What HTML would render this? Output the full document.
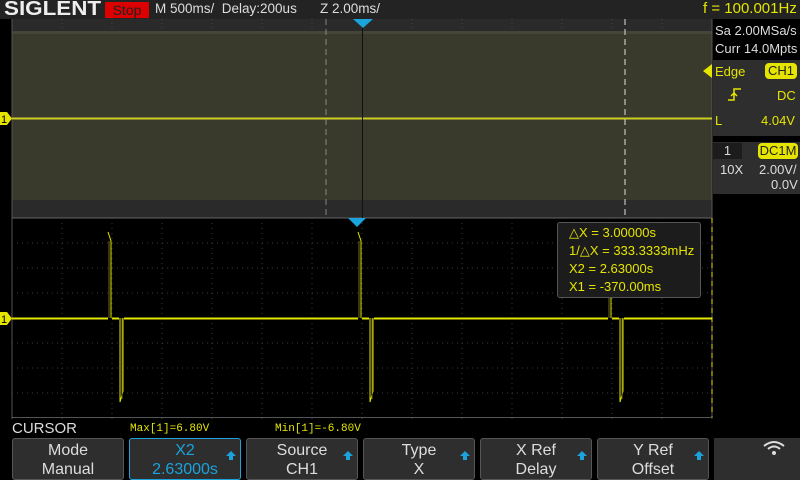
<!DOCTYPE html>
<html><head><style>
body{margin:0;width:800px;height:480px;background:#000;overflow:hidden;font-family:"Liberation Sans",sans-serif;position:relative}
.a{position:absolute;white-space:nowrap}
.btn{position:absolute;top:438px;width:112px;height:42px;background:#2e2e2e;border:1px solid #555;border-radius:3px;box-sizing:border-box;color:#ddd;font-size:16px;text-align:center;line-height:19px;padding-top:2px}
.up{position:absolute;right:4px;top:12px;width:0;height:0;border-left:5px solid transparent;border-right:5px solid transparent;border-bottom:5px solid #1aa3dd}
.up:after{content:"";position:absolute;left:-2px;top:5px;width:4px;height:4px;background:#1aa3dd}
</style></head><body>
<div class="a" style="left:0;top:0;width:800px;height:19px;background:#232323"></div>
<div class="a" style="left:4px;top:-2px;color:#eee;font-weight:bold;font-size:20px;transform:scaleX(1.12);transform-origin:0 0">SIGLENT</div>
<div class="a" style="left:105px;top:2px;width:44px;height:16px;background:#d00;color:#222;font-size:14px;line-height:16px;text-align:center">Stop</div>
<div class="a" style="left:155px;top:1px;color:#ddd;font-size:13.5px">M 500ms/&nbsp; Delay:200us</div>
<div class="a" style="left:320px;top:1px;color:#ddd;font-size:13.5px">Z 2.00ms/</div>
<div class="a" style="left:703px;top:0px;color:#e5e500;font-size:15px">f = 100.001Hz</div>

<svg class="a" style="left:0;top:19px" width="713" height="400">
<rect x="12" y="0" width="700" height="181" fill="#3a3a2c"/>
<rect x="12" y="0" width="700" height="12" fill="#2a2a2a"/>
<rect x="12" y="12" width="700" height="3" fill="#45453a"/>
<rect x="12" y="181" width="700" height="18" fill="#2a2a2a"/>
<line x1="12" y1="199" x2="712" y2="199" fill="none" stroke="#666"/>
<line x1="12" y1="0" x2="12" y2="400" stroke="#555"/>
<line x1="712" y1="0" x2="712" y2="400" stroke="#555"/>
<g stroke="#444" stroke-dasharray="1,3">
<line x1="62" y1="0" x2="62" y2="12"/><line x1="112" y1="0" x2="112" y2="12"/><line x1="162" y1="0" x2="162" y2="12"/><line x1="212" y1="0" x2="212" y2="12"/><line x1="262" y1="0" x2="262" y2="12"/><line x1="312" y1="0" x2="312" y2="12"/>
<line x1="412" y1="0" x2="412" y2="12"/><line x1="462" y1="0" x2="462" y2="12"/><line x1="512" y1="0" x2="512" y2="12"/><line x1="562" y1="0" x2="562" y2="12"/><line x1="612" y1="0" x2="612" y2="12"/><line x1="662" y1="0" x2="662" y2="12"/>
</g>
<line x1="12" y1="99.5" x2="712" y2="99.5" stroke="#cccc22" stroke-width="2"/>
<line x1="326" y1="0" x2="326" y2="199" stroke="#aaa" stroke-dasharray="6,4" opacity=".7"/>
<line x1="625" y1="0" x2="625" y2="199" stroke="#ddd" stroke-dasharray="6,4"/>
<line x1="362.5" y1="6" x2="362.5" y2="199" stroke="#111"/>
<polygon points="353,0 373,0 363,9" fill="#1aa3dd"/>
<g stroke="#3a3a3a" stroke-dasharray="1,4">
<line x1="62" y1="199" x2="62" y2="400"/><line x1="112" y1="199" x2="112" y2="400"/><line x1="162" y1="199" x2="162" y2="400"/><line x1="212" y1="199" x2="212" y2="400"/><line x1="262" y1="199" x2="262" y2="400"/><line x1="312" y1="199" x2="312" y2="400"/><line x1="362" y1="199" x2="362" y2="400"/><line x1="412" y1="199" x2="412" y2="400"/><line x1="462" y1="199" x2="462" y2="400"/><line x1="512" y1="199" x2="512" y2="400"/><line x1="562" y1="199" x2="562" y2="400"/><line x1="612" y1="199" x2="612" y2="400"/><line x1="662" y1="199" x2="662" y2="400"/>
<line x1="12" y1="224" x2="712" y2="224"/><line x1="12" y1="249" x2="712" y2="249"/><line x1="12" y1="274" x2="712" y2="274"/><line x1="12" y1="324" x2="712" y2="324"/><line x1="12" y1="349" x2="712" y2="349"/><line x1="12" y1="374" x2="712" y2="374"/>
</g>
<line x1="12" y1="398.5" x2="712" y2="398.5" stroke="#555"/>
<g fill="none" stroke="#e5e500" stroke-width="1">
<path d="M108,213 L111,222 L111,299 M120,299 L120,383 L123,372 L123,299"/>
<path d="M358,213 L361,222 L361,299 M370,299 L370,383 L373,372 L373,299"/>
<path d="M608,213 L611,222 L611,299 M620,299 L620,383 L623,372 L623,299"/>
</g>
<g stroke="#6a6a20" stroke-width="1"><line x1="109" y1="222" x2="109" y2="299"/><line x1="122" y1="299" x2="122" y2="380"/><line x1="359" y1="222" x2="359" y2="299"/><line x1="372" y1="299" x2="372" y2="380"/><line x1="609" y1="222" x2="609" y2="299"/><line x1="622" y1="299" x2="622" y2="380"/></g>
<path d="M12,299.5 H108 M112,299.5 H119 M124,299.5 H358 M362,299.5 H369 M374,299.5 H608 M612,299.5 H619 M624,299.5 H712" stroke="#e5e500" stroke-width="2"/>
<polygon points="348,199 366,199 357,208" fill="#1aa3dd"/>
<line x1="712" y1="199" x2="712" y2="398" stroke="#e5e500" stroke-dasharray="5,4"/>
<polygon points="0,93 7,93 12,99.5 7,106 0,106" fill="#e5e500"/>
<polygon points="0,293 7,293 12,299.5 7,306 0,306" fill="#e5e500"/>
<text x="1" y="104" font-size="11" fill="#000" font-family="Liberation Sans">1</text>
<text x="1" y="304" font-size="11" fill="#000" font-family="Liberation Sans">1</text>
</svg>

<div class="a" style="left:557px;top:222px;width:144px;height:76px;background:#1c1c1c;border:1px solid #555;border-radius:3px;color:#e5e500;font-size:13px;line-height:18px;padding:1px 0 0 11px;box-sizing:border-box">△X = 3.00000s<br>1/△X = 333.3333mHz<br>X2 = 2.63000s<br>X1 = -370.00ms</div>

<div class="a" style="left:713px;top:19px;width:87px;height:42px;background:#000;color:#ddd;font-size:13px;line-height:18px;padding:3px 0 0 2px;box-sizing:border-box">Sa 2.00MSa/s<br>Curr 14.0Mpts</div>
<div class="a" style="left:713px;top:60px;width:87px;height:76px;background:#2e2e2e"></div>
<div class="a" style="left:703px;top:64px;width:0;height:0;border-top:7px solid transparent;border-bottom:7px solid transparent;border-right:9px solid #e5e500"></div>
<div class="a" style="left:715px;top:64px;color:#e5e500;font-size:13px">Edge</div>
<div class="a" style="left:765px;top:63px;width:32px;height:16px;background:#e5e500;border-radius:4px;color:#222;font-size:13px;text-align:center;line-height:16px">CH1</div>
<div class="a" style="left:777px;top:88px;color:#e5e500;font-size:13px">DC</div>
<svg class="a" style="left:727px;top:86px" width="16" height="16"><path d="M1,14 H7 V3 H14 M4,10 L7,7 L10,10" fill="none" stroke="#e5e500" stroke-width="1.5"/></svg>
<div class="a" style="left:715px;top:113px;color:#e5e500;font-size:13px">L</div>
<div class="a" style="left:761px;top:113px;color:#e5e500;font-size:13px">4.04V</div>
<div class="a" style="left:713px;top:142px;width:87px;height:52px;background:#2e2e2e"></div>
<div class="a" style="left:713px;top:143px;width:29px;height:16px;background:#1c1c1c;color:#ddd;font-size:13px;text-align:center;line-height:16px">1</div>
<div class="a" style="left:758px;top:143px;width:40px;height:16px;background:#e5e500;border-radius:4px;color:#222;font-size:13px;text-align:center;line-height:16px">DC1M</div>
<div class="a" style="left:720px;top:162px;color:#ddd;font-size:13px">10X</div>
<div class="a" style="left:759px;top:162px;color:#ddd;font-size:13px">2.00V/</div>
<div class="a" style="left:771px;top:177px;color:#ddd;font-size:13px">0.0V</div>

<div class="a" style="left:12px;top:420px;color:#ddd;font-size:15px">CURSOR</div>
<div class="a" style="left:130px;top:423px;color:#e5e500;font-size:11px;font-family:'Liberation Mono',monospace">Max[1]=6.80V</div>
<div class="a" style="left:275px;top:423px;color:#e5e500;font-size:11px;font-family:'Liberation Mono',monospace">Min[1]=-6.80V</div>

<div class="btn" style="left:12px">Mode<br>Manual</div>
<div class="btn" style="left:129px;border-color:#1aa3dd;color:#1aa3dd">X2<br>2.63000s<span class="up"></span></div>
<div class="btn" style="left:246px">Source<br>CH1<span class="up"></span></div>
<div class="btn" style="left:363px">Type<br>X<span class="up"></span></div>
<div class="btn" style="left:480px">X Ref<br>Delay<span class="up"></span></div>
<div class="btn" style="left:597px">Y Ref<br>Offset<span class="up"></span></div>
<div class="a" style="left:714px;top:438px;width:86px;height:42px;background:#2e2e2e"></div>
<svg class="a" style="left:762px;top:440px" width="24" height="16"><g fill="none" stroke="#ddd" stroke-width="2"><path d="M2,6 Q12,-2 22,6"/><path d="M6,9 Q12,4 18,9"/></g><circle cx="12" cy="13" r="2" fill="#ddd"/></svg>
</body></html>
